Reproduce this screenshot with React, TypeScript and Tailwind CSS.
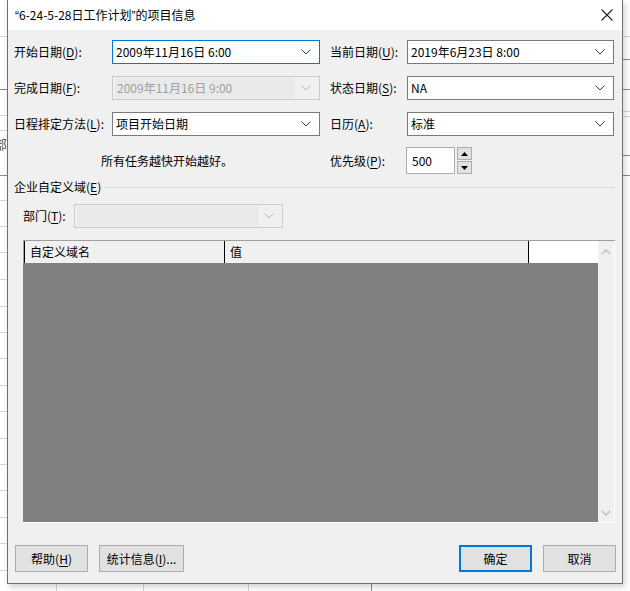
import React from "react";

const leftLines = [
  { y: 36, dark: false },
  { y: 89, dark: true },
  { y: 115, dark: false },
  { y: 130, dark: false },
  { y: 175, dark: true },
  ...[200, 226, 252, 279, 306, 332, 358, 385, 411, 438, 464, 490, 517, 543, 570].map((y) => ({ y, dark: false })),
];

const rightLines = [
  { y: 36, dark: false },
  { y: 59, dark: true },
  { y: 89, dark: true },
  { y: 111, dark: false },
  { y: 116, dark: false },
  { y: 155, dark: true },
  { y: 175, dark: true },
];

const bottomCols = [
  { x: 56, dark: false },
  { x: 143, dark: false },
  { x: 248, dark: false },
  { x: 371, dark: true },
];

function Chevron({ color = "#3c3c3c" }: { color?: string }) {
  return (
    <svg width="10" height="6" viewBox="0 0 10 6" className="shrink-0">
      <polyline points="0.5,0.5 5,5 9.5,0.5" fill="none" stroke={color} strokeWidth="1" />
    </svg>
  );
}

function Label({ text, k, after = "):", className = "" }: { text: string; k: string; after?: string; className?: string }) {
  return (
    <div className={`flex items-center text-[12px] text-black shrink-0 ${className}`}>
      <span>
        {text}(<span className="underline underline-offset-2">{k}</span>
        {after}
      </span>
    </div>
  );
}

interface ComboProps {
  value?: string;
  width: string;
  focused?: boolean;
  disabled?: boolean;
}

function Combo({ value = "", width, focused, disabled }: ComboProps) {
  if (disabled) {
    return (
      <div className={`${width} h-[24px] shrink-0 flex items-center border border-[#cccccc] bg-[#f0f0f0] pl-[2px] pr-[8px]`}>
        <div className="flex-1 h-[20px] bg-[#e9e9e9] flex items-center pl-[2px] text-[12px] text-[#a0a0a0]">
          {value}
        </div>
        <div className="ml-[6px]">
          <Chevron color="#b5b5b5" />
        </div>
      </div>
    );
  }
  return (
    <div
      className={`${width} h-[24px] shrink-0 flex items-center bg-white border pl-[3px] pr-[8px] ${
        focused ? "border-[#0078d7]" : "border-[#7a7a7a]"
      }`}
    >
      <div className="flex-1 text-[12px] text-black">{value}</div>
      <Chevron />
    </div>
  );
}

function Button({ children, width, primary }: { children: React.ReactNode; width: string; primary?: boolean }) {
  return (
    <div
      className={`${width} h-[27px] shrink-0 flex items-center justify-center bg-[#e1e1e1] text-[12px] text-black ${
        primary ? "border-2 border-[#0078d7]" : "border border-[#adadad]"
      }`}
    >
      {children}
    </div>
  );
}

export default function App() {
  return (
    <div className="relative w-[630px] h-[591px] overflow-hidden bg-white font-['Microsoft_YaHei','Noto_Sans_CJK_SC',sans-serif]">
      {/* spreadsheet behind the dialog */}
      {leftLines.map((l) => (
        <div
          key={`l${l.y}`}
          className={`absolute left-0 w-[8px] h-px ${l.dark ? "bg-[#8a8a8a]" : "bg-[#d4d4d4]"}`}
          style={{ top: l.y }}
        />
      ))}
      {rightLines.map((l) => (
        <div
          key={`r${l.y}`}
          className={`absolute left-[622px] w-[8px] h-px ${l.dark ? "bg-[#8a8a8a]" : "bg-[#d4d4d4]"}`}
          style={{ top: l.y }}
        />
      ))}
      {bottomCols.map((c) => (
        <div
          key={`c${c.x}`}
          className={`absolute top-[583px] h-[8px] w-px ${c.dark ? "bg-[#8a8a8a]" : "bg-[#d4d4d4]"}`}
          style={{ left: c.x }}
        />
      ))}
      <div className="absolute left-[-6px] top-[134px] text-[13px] text-[#555]">部</div>

      {/* dialog */}
      <div className="absolute left-[7px] top-0 w-[616px] h-[584px] bg-[#f0f0f0] border-x border-b border-[#707070] shadow-[2px_3px_6px_rgba(0,0,0,0.18)] flex flex-col">
        <div className="h-[30px] bg-white flex items-center pl-[7px] pr-[8px] shrink-0">
          <span className="flex-1 text-[12px] text-black">
            <span className="font-['Liberation_Sans',sans-serif]">“</span>6-24-5-28日工作计划
            <span className="font-['Liberation_Sans',sans-serif]">”</span>的项目信息
          </span>
          <svg width="12" height="12" viewBox="0 0 12 12" className="mr-[1px]">
            <path d="M0.5 0.5 L11.5 11.5 M11.5 0.5 L0.5 11.5" stroke="#222" strokeWidth="1.1" />
          </svg>
        </div>

        <div className="flex flex-col pl-[6px] pr-[7px]">
          <div className="flex mt-[10px] h-[24px]">
            <Label text="开始日期" k="D" className="w-[98px]" />
            <Combo value="2009年11月16日 6:00" width="w-[208px]" focused />
            <Label text="当前日期" k="U" className="w-[77px] ml-[10px]" />
            <Combo value="2019年6月23日 8:00" width="w-[207px]" />
          </div>

          <div className="flex mt-[12px] h-[24px]">
            <Label text="完成日期" k="F" className="w-[98px] text-[#000]" />
            <Combo value="2009年11月16日 9:00" width="w-[208px]" disabled />
            <Label text="状态日期" k="S" className="w-[77px] ml-[10px]" />
            <Combo value="NA" width="w-[207px]" />
          </div>

          <div className="flex mt-[12px] h-[24px]">
            <Label text="日程排定方法" k="L" className="w-[98px]" />
            <Combo value="项目开始日期" width="w-[208px]" />
            <Label text="日历" k="A" className="w-[77px] ml-[10px]" />
            <Combo value="标准" width="w-[207px]" />
          </div>

          <div className="flex mt-[11px] h-[27px]">
            <div className="w-[306px] pl-[87px] flex items-center text-[12px] text-black">所有任务越快开始越好。</div>
            <Label text="优先级" k="P" className="w-[76px] ml-[10px]" />
            <div className="w-[49px] h-[27px] bg-white border border-[#adadad] flex items-center pl-[5px] text-[12px] text-black">
              500
            </div>
            <div className="ml-[2px] w-[15px] flex flex-col gap-px">
              <div className="h-[13px] bg-[#e1e1e1] border border-[#adadad] flex items-center justify-center">
                <svg width="7" height="4" viewBox="0 0 7 4">
                  <polygon points="0,4 7,4 3.5,0" fill="#000" />
                </svg>
              </div>
              <div className="h-[13px] bg-[#e1e1e1] border border-[#adadad] flex items-center justify-center">
                <svg width="7" height="4" viewBox="0 0 7 4">
                  <polygon points="0,0 7,0 3.5,4" fill="#000" />
                </svg>
              </div>
            </div>
          </div>

          <div className="flex items-center mt-[6px] h-[14px]">
            <Label text="企业自定义域" k="E" after=")" />
            <div className="flex-1 h-px bg-[#d8d8d8] ml-[3px]" />
          </div>

          <div className="flex mt-[10px] h-[24px] ml-[9px]">
            <Label text="部门" k="T" className="w-[51px]" />
            <Combo width="w-[209px]" disabled />
          </div>

          <div className="mt-[12px] ml-[9px] w-[592px] h-[283px] bg-white border-t border-[#a0a0a0] flex pb-px">
            <div className="w-[575px] flex flex-col">
              <div className="h-[22px] flex border-l border-[#a0a0a0]">
                <div className="w-[200px] bg-[#f0f0f0] border-l border-[#000] flex items-center pl-[5px] text-[12px] text-black">
                  自定义域名
                </div>
                <div className="w-[304px] bg-[#f0f0f0] border-l border-[#000] flex items-center pl-[5px] text-[12px] text-black">
                  值
                </div>
                <div className="flex-1 bg-white border-l border-[#000]" />
              </div>
              <div className="flex-1 bg-[#808080]" />
            </div>
            <div className="w-[16px] bg-[#f0f0f0] flex flex-col items-center justify-between pt-[8px] pb-[6px]">
              <svg width="10" height="6" viewBox="0 0 10 6">
                <polyline points="1,5 5,1 9,5" fill="none" stroke="#c2c2c2" strokeWidth="1.6" />
              </svg>
              <svg width="10" height="6" viewBox="0 0 10 6">
                <polyline points="1,1 5,5 9,1" fill="none" stroke="#c2c2c2" strokeWidth="1.6" />
              </svg>
            </div>
          </div>

          <div className="flex mt-[22px] ml-px -mr-px">
            <Button width="w-[73px]">
              <span>
                帮助(<span className="underline underline-offset-2">H</span>)
              </span>
            </Button>
            <div className="ml-[11px]">
              <Button width="w-[85px]">
                <span>
                  统计信息(<span className="underline underline-offset-2">I</span>)...
                </span>
              </Button>
            </div>
            <div className="ml-auto flex gap-[11px]">
              <Button width="w-[73px]" primary>
                确定
              </Button>
              <Button width="w-[73px]">取消</Button>
            </div>
          </div>
        </div>
      </div>
    </div>
  );
}
